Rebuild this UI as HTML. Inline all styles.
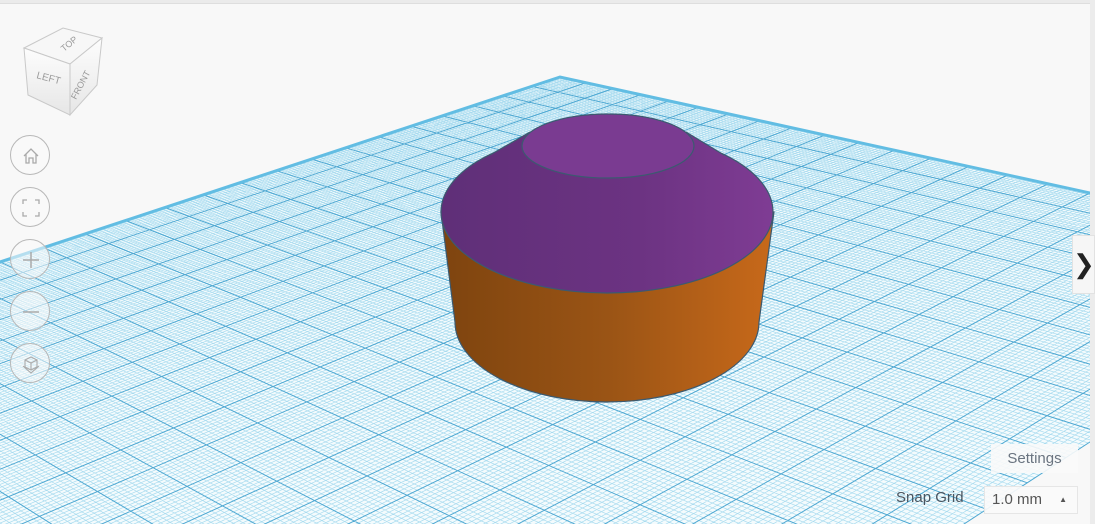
<!DOCTYPE html>
<html><head><meta charset="utf-8"><style>
html,body{margin:0;padding:0;width:1095px;height:524px;overflow:hidden;background:#f8f8f8;font-family:"Liberation Sans",sans-serif}
#top{position:absolute;left:0;top:0;width:1095px;height:3px;background:#ebebeb;border-bottom:1px solid #dedede}
#rs{position:absolute;right:0;top:0;width:5px;height:524px;background:#ececec}
svg{position:absolute;left:0;top:0}
.btn{position:absolute;left:10px;width:40px;height:40px;border:1px solid #b8b8b8;border-radius:50%;background:rgba(250,250,250,.55);box-sizing:border-box}
.btn svg{position:absolute;left:0;top:0}
#tab{position:absolute;left:1072px;top:235px;width:23px;height:59px;background:#f6f6f6;border:1px solid #e2e2e2;box-sizing:border-box;font-size:26px;color:#222;text-align:center;line-height:56px;overflow:hidden}
#settings{position:absolute;left:991px;top:444px;width:87px;height:29px;background:rgba(250,250,250,.9);color:#6a7480;font-size:15px;line-height:29px;text-align:center}
#snap{position:absolute;left:896px;top:489px;color:#4a5560;font-size:15px;line-height:18px}
#dd{position:absolute;left:984px;top:486px;width:94px;height:28px;background:rgba(250,250,250,.92);border:1px solid #e6e6e6;box-sizing:border-box;color:#555;font-size:15px;line-height:26px;padding-left:7px}
#dd span{position:absolute;right:10px;top:0;font-size:8px}
</style></head><body>
<div id="top"></div>
<svg id="g" width="1090" height="524" viewBox="0 0 1090 524"></svg>
<svg width="1095" height="524" viewBox="0 0 1095 524" style="pointer-events:none">
<defs>
<linearGradient id="og" x1="0" x2="1"><stop offset="0" stop-color="#7e440f"/><stop offset="0.5" stop-color="#9a5415"/><stop offset="1" stop-color="#c8691a"/></linearGradient>
<linearGradient id="pg" gradientUnits="userSpaceOnUse" x1="441" x2="774" y1="0" y2="0"><stop offset="0" stop-color="#5f2f78"/><stop offset="0.6" stop-color="#6c3382"/><stop offset="1" stop-color="#7f3c94"/></linearGradient>
<linearGradient id="cg" x1="0" y1="0" x2="0" y2="1"><stop offset="0" stop-color="#fdfdfd"/><stop offset="1" stop-color="#e6e6e6"/></linearGradient>
</defs>
<path d="M441,212 L455,322 A152,80 0 0 0 759,322 L774,212 Z" fill="url(#og)" stroke="#3c5a70" stroke-width="1.2"/>
<ellipse cx="607" cy="212" rx="166" ry="81" fill="url(#pg)" stroke="#3c5a70" stroke-width="1.2"/>
<polygon points="490,155 530,132 608,125 686,132 724,155 608,230" fill="url(#pg)"/>
<path d="M490,155 L530,132 M686,132 L724,155" stroke="#3c5a70" stroke-width="1.2"/>
<ellipse cx="608" cy="146" rx="86" ry="32" fill="#7a3b91" stroke="#3c5a70" stroke-width="1.2"/>
<g stroke="#c9c9c9" stroke-width="1">
<path d="M24,48 L63,28 L102,38 L70,64 Z" fill="#f7f7f7"/>
<path d="M24,48 L70,64 L70,115 L28,95 Z" fill="url(#cg)"/>
<path d="M70,64 L102,38 L97,85 L70,115 Z" fill="url(#cg)"/>
</g>
<text x="36" y="78" font-size="10" fill="#9a9a9a" transform="rotate(15 36 78)" font-family="Liberation Sans">LEFT</text>
<text x="76" y="100" font-size="9" fill="#9a9a9a" transform="rotate(-62 76 100)" font-family="Liberation Sans">FRONT</text>
<text x="64" y="52" font-size="9" fill="#9a9a9a" transform="rotate(-40 64 52)" font-family="Liberation Sans">TOP</text>
</svg>
<div class="btn" style="top:135px"><svg width="40" height="40"><path d="M13,20 L20,13 L27,20 M15,18 V27 H18 V22 H22 V27 H25 V18" fill="none" stroke="#aaa" stroke-width="1.3"/></svg></div>
<div class="btn" style="top:187px"><svg width="40" height="40"><path d="M12,16 V12 H16 M24,12 H28 V16 M28,24 V28 H24 M16,28 H12 V24" fill="none" stroke="#aaa" stroke-width="1.3"/></svg></div>
<div class="btn" style="top:239px"><svg width="40" height="40"><path d="M20,12 V28 M12,20 H28" stroke="#aaa" stroke-width="1.5"/></svg></div>
<div class="btn" style="top:291px"><svg width="40" height="40"><path d="M12,20 H28" stroke="#aaa" stroke-width="1.5"/></svg></div>
<div class="btn" style="top:343px"><svg width="40" height="40"><path d="M14,16 L20,13 L26,16 V23 L20,26 L14,23 Z M14,16 L20,19 L26,16 M20,19 V26 M12,22 L20,29 L28,22" fill="none" stroke="#aaa" stroke-width="1.1"/></svg></div>
<div id="rs"></div>
<div id="tab">&#x276F;</div>
<div id="settings">Settings</div>
<div id="snap">Snap Grid</div>
<div id="dd">1.0 mm<span>&#9650;</span></div>
<script>
(function(){
var src=[[0,0],[16,0],[0,16],[16,16]],dst=[[560,77],[1090,193],[0,262],[500,490]];
var A=[],B=[];
for(var k=0;k<4;k++){var u=src[k][0],v=src[k][1],x=dst[k][0],y=dst[k][1];
A.push([u,v,1,0,0,0,-u*x,-v*x]);B.push(x);A.push([0,0,0,u,v,1,-u*y,-v*y]);B.push(y);}
var n=8;for(var i=0;i<n;i++){var p=i;for(var r=i+1;r<n;r++)if(Math.abs(A[r][i])>Math.abs(A[p][i]))p=r;
var t=A[i];A[i]=A[p];A[p]=t;t=B[i];B[i]=B[p];B[p]=t;
for(var r=0;r<n;r++){if(r==i)continue;var f=A[r][i]/A[i][i];for(var c=i;c<n;c++)A[r][c]-=f*A[i][c];B[r]-=f*B[i];}}
var h=[];for(var i=0;i<n;i++)h.push(B[i]/A[i][i]);
function P(u,v){var w=h[6]*u+h[7]*v+1;return[(h[0]*u+h[1]*v+h[2])/w,(h[3]*u+h[4]*v+h[5])/w];}
var M=22,s='';
var c=[P(0,0),P(M,0),P(M,M),P(0,M)];
s+='<polygon points="'+c.map(function(q){return q[0].toFixed(1)+','+q[1].toFixed(1)}).join(' ')+'" fill="#f4fbfd"/>';
var mi='',ma='';
for(var i=0;i<=M*10;i++){var t=i/10;var a=P(t,0),b=P(t,M),a2=P(0,t),b2=P(M,t);
var seg='M'+a[0].toFixed(1)+','+a[1].toFixed(1)+'L'+b[0].toFixed(1)+','+b[1].toFixed(1)+'M'+a2[0].toFixed(1)+','+a2[1].toFixed(1)+'L'+b2[0].toFixed(1)+','+b2[1].toFixed(1);
if(i%10==0)ma+=seg;else mi+=seg;}
s+='<path d="'+mi+'" stroke="#a8dbef" stroke-width="0.7" fill="none"/>';
s+='<path d="'+ma+'" stroke="#4ea8d2" stroke-width="1" fill="none"/>';
var o=P(0,0),r=P(M,0),l=P(0,M);
s+='<path d="M'+l[0]+','+l[1]+'L'+o[0]+','+o[1]+'L'+r[0]+','+r[1]+'" stroke="#62bde3" stroke-width="3" fill="none"/>';
document.getElementById('g').innerHTML=s;
})();
</script>
</body></html>
